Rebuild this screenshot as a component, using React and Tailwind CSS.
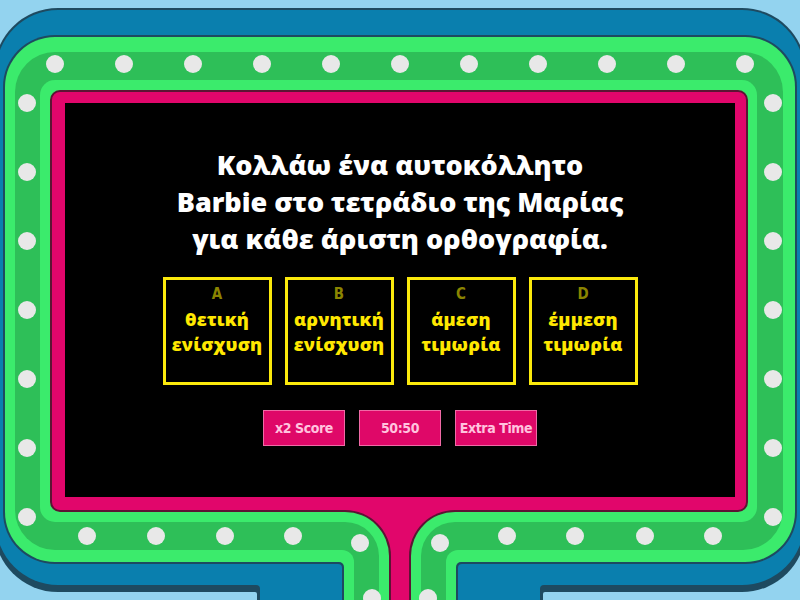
function Box({ letter, l1, l2 }) {
  return (
    <div className="w-[109px] h-[108px] border-[3px] border-[#fbe90c] flex flex-col items-center pt-[5px]">
      <div className="h-[18px] leading-[18px] text-[15px] font-bold text-[#8a8400] font-['DejaVu_Sans_Condensed','DejaVu_Sans',sans-serif]">{letter}</div>
      <div className="mt-[4px] text-[18px] leading-[25px] font-extrabold text-[#ffe800] text-center tracking-[0.2px]">{l1}<br />{l2}</div>
    </div>
  );
}

function Btn({ children }) {
  return (
    <div className="w-[82px] h-[36px] bg-[#df0868] border border-[#f06aa6] flex items-center justify-center text-[14px] font-bold tracking-[-0.4px] text-[#ffc3de] font-['DejaVu_Sans_Condensed','DejaVu_Sans',sans-serif]">
      {children}
    </div>
  );
}

export default function App() {
  const dots = [];
  for (let i = 0; i < 11; i++) dots.push([55 + 69 * i, 64]);
  for (let j = 0; j < 7; j++) {
    dots.push([27, 103 + 69 * j]);
    dots.push([773, 103 + 69 * j]);
  }
  [87, 156, 225, 293, 507, 575, 645, 713].forEach((x) => dots.push([x, 536]));
  dots.push([360, 543], [440, 543], [372, 598], [428, 598]);

  return (
    <div className="relative w-[800px] h-[600px] overflow-hidden bg-[#93d3ef] pt-[8px] font-['Open_Sans','Noto_Sans',sans-serif]">
      {/* main frame */}
      <div className="ml-[-6px] w-[812px] h-[584px] rounded-[64px] bg-[#1e4a60] pt-[2px] px-[2px] pb-[7px] flex flex-col">
        <div className="flex-1 flex flex-col rounded-[62px] bg-[#0a7fae] pt-[25px] pb-[21px] px-[7px]">
          <div className="flex-1 flex flex-col rounded-[52px] bg-[#1e4a60] p-[2px]">
            <div className="flex-1 flex flex-col rounded-[50px] bg-[#3beb6c] pt-[15px] pb-[12px] pl-[10px] pr-[12px]">
              <div className="flex-1 flex flex-col rounded-[40px] bg-[#2ebf58] py-[28px] pl-[25px] pr-[26px]">
                <div className="flex-1 flex flex-col rounded-[15px] bg-[#3beb6c] py-[10px] pl-[10px] pr-[9px]">
                  <div className="flex-1 flex flex-col rounded-[10px] bg-[#e1066b] border-2 border-[#5c1434] pt-[11px] pb-[13px] pl-[13px] pr-[11px]">
                    <div className="flex-1 flex flex-col items-center bg-black pt-[43px]">
                      <p className="text-white text-[27px] leading-[37px] font-extrabold text-center">
                        Κολλάω ένα αυτοκόλλητο<br />
                        Barbie στο τετράδιο της Μαρίας<br />
                        για κάθε άριστη ορθογραφία.
                      </p>
                      <div className="flex gap-[13px] mt-[20px]">
                        <Box letter="A" l1="θετική" l2="ενίσχυση" />
                        <Box letter="B" l1="αρνητική" l2="ενίσχυση" />
                        <Box letter="C" l1="άμεση" l2="τιμωρία" />
                        <Box letter="D" l1="έμμεση" l2="τιμωρία" />
                      </div>
                      <div className="flex gap-[14px] mt-[25px]">
                        <Btn>x2 Score</Btn>
                        <Btn>50:50</Btn>
                        <Btn>Extra Time</Btn>
                      </div>
                    </div>
                  </div>
                </div>
              </div>
            </div>
          </div>
        </div>
      </div>

      {/* stand stem */}
      <div className="absolute left-[340px] top-[505px] w-[120px] h-[95px] bg-[#e1066b]" />

      {/* left bottom pocket */}
      <div className="absolute left-[200px] top-[510px] w-[191px] h-[90px] flex flex-col rounded-tr-[46px] bg-[#5c1434] pt-[2px] pr-[2px]">
        <div className="flex-1 flex flex-col rounded-tr-[44px] bg-[#3beb6c] pt-[10px] pr-[10px]">
          <div className="flex-1 flex flex-col rounded-tr-[34px] bg-[#2ebf58] pt-[28px] pr-[25px]">
            <div className="flex-1 flex flex-col rounded-tr-[12px] bg-[#3beb6c] pt-[12px] pr-[10px]">
              <div className="flex-1 flex flex-col rounded-tr-[5px] bg-[#1e4a60] pt-[2px] pr-[2px]">
                <div className="flex-1 flex flex-col rounded-tr-[4px] bg-[#0a7fae] pt-[21px] pr-[82px]">
                  <div className="flex-1 flex flex-col rounded-tr-[4px] bg-[#1e4a60] pt-[7px] pr-[3px]">
                    <div className="flex-1 rounded-tr-[2px] bg-[#93d3ef]" />
                  </div>
                </div>
              </div>
            </div>
          </div>
        </div>
      </div>

      {/* right bottom pocket */}
      <div className="absolute left-[409px] top-[510px] w-[191px] h-[90px] flex flex-col rounded-tl-[46px] bg-[#5c1434] pt-[2px] pl-[2px]">
        <div className="flex-1 flex flex-col rounded-tl-[44px] bg-[#3beb6c] pt-[10px] pl-[10px]">
          <div className="flex-1 flex flex-col rounded-tl-[34px] bg-[#2ebf58] pt-[28px] pl-[25px]">
            <div className="flex-1 flex flex-col rounded-tl-[12px] bg-[#3beb6c] pt-[12px] pl-[10px]">
              <div className="flex-1 flex flex-col rounded-tl-[5px] bg-[#1e4a60] pt-[2px] pl-[2px]">
                <div className="flex-1 flex flex-col rounded-tl-[4px] bg-[#0a7fae] pt-[21px] pl-[82px]">
                  <div className="flex-1 flex flex-col rounded-tl-[4px] bg-[#1e4a60] pt-[7px] pl-[3px]">
                    <div className="flex-1 rounded-tl-[2px] bg-[#93d3ef]" />
                  </div>
                </div>
              </div>
            </div>
          </div>
        </div>
      </div>

      {/* light bulbs */}
      {dots.map(([x, y], i) => (
        <div
          key={i}
          className="absolute w-[18px] h-[18px] rounded-full bg-[#e8e8e8]"
          style={{ left: x - 9, top: y - 9 }}
        />
      ))}
    </div>
  );
}
